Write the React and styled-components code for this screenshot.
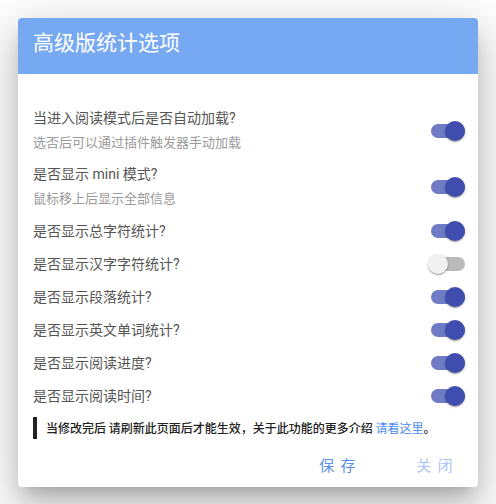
import styled, { createGlobalStyle } from "styled-components";

const GlobalStyle = createGlobalStyle`
  html, body {
    margin: 0;
    padding: 0;
    background: #fff;
  }
  body {
    font-family: Roboto, "Noto Sans CJK SC", sans-serif;
  }
`;

const Dialog = styled.div`
  box-sizing: border-box;
  width: 460px;
  margin: 18px;
  background: #fff;
  border-radius: 4px;
  overflow: hidden;
  box-shadow: 0 11px 15px -7px rgba(0, 0, 0, 0.2),
    0 24px 38px 3px rgba(0, 0, 0, 0.14), 0 9px 46px 8px rgba(0, 0, 0, 0.12);
`;

const Header = styled.div`
  box-sizing: border-box;
  height: 56px;
  padding: 13px 15px 0;
  background: #77a9f2;
  color: #fff;
  font-size: 21px;
  line-height: 21px;
  font-family: "Noto Sans CJK SC", sans-serif;
`;

const Body = styled.div`
  padding: 28.5px 13px 0 15px;
`;

const Row = styled.div`
  box-sizing: border-box;
  display: flex;
  align-items: center;
  justify-content: space-between;
  min-height: 33px;
  padding: 3.5px 0;
`;

const Texts = styled.div`
  display: flex;
  flex-direction: column;
`;

const Label = styled.div`
  font-size: 14px;
  line-height: 24.5px;
  color: #555;
`;

const Hint = styled.div`
  font-size: 13px;
  line-height: 24.5px;
  color: #9a9a9a;
`;

const Track = styled.div`
  position: relative;
  flex: none;
  width: 34px;
  height: 14px;
  border-radius: 7px;
  background: ${(p) => (p.$on ? "#6f7cc5" : "#bababa")};
`;

const Thumb = styled.span`
  position: absolute;
  top: -3px;
  left: ${(p) => (p.$on ? "14px" : "-3px")};
  width: 20px;
  height: 20px;
  border-radius: 50%;
  background: ${(p) => (p.$on ? "#3f4eae" : "#f1f1f1")};
  box-shadow: 0 1px 3px rgba(0, 0, 0, 0.2), 0 1px 1px rgba(0, 0, 0, 0.14),
    0 2px 1px -1px rgba(0, 0, 0, 0.12);
`;

const Note = styled.div`
  margin-top: 4.5px;
  border-left: 4px solid #222;
  padding-left: 9px;
  font-size: 12px;
  line-height: 21.5px;
  font-weight: 500;
  color: #222;
  font-family: "Noto Sans CJK SC", sans-serif;
`;

const Link = styled.a`
  color: #4d8cf2;
  text-decoration: none;
  font-weight: 400;
`;

const Footer = styled.div`
  display: flex;
  justify-content: flex-end;
  gap: 31px;
  margin-top: 8px;
  padding: 0 10px 4px 0;
`;

const Button = styled.button`
  height: 36px;
  padding: 0 14px;
  border: none;
  background: none;
  font-family: "Noto Sans CJK SC", sans-serif;
  font-size: 15px;
  letter-spacing: 1.5px;
  color: ${(p) => (p.$muted ? "#a9c6f6" : "#5a8fe6")};
  cursor: pointer;
`;

const options = [
  { label: "当进入阅读模式后是否自动加载?", hint: "选否后可以通过插件触发器手动加载", on: true },
  { label: "是否显示 mini 模式?", hint: "鼠标移上后显示全部信息", on: true },
  { label: "是否显示总字符统计?", on: true },
  { label: "是否显示汉字字符统计?", on: false },
  { label: "是否显示段落统计?", on: true },
  { label: "是否显示英文单词统计?", on: true },
  { label: "是否显示阅读进度?", on: true },
  { label: "是否显示阅读时间?", on: true },
];

const Switch = ({ on }) => (
  <Track $on={on}>
    <Thumb $on={on} />
  </Track>
);

export default function App() {
  return (
    <>
      <GlobalStyle />
      <Dialog>
        <Header>高级版统计选项</Header>
        <Body>
          {options.map((o) => (
            <Row key={o.label}>
              <Texts>
                <Label>{o.label}</Label>
                {o.hint && <Hint>{o.hint}</Hint>}
              </Texts>
              <Switch on={o.on} />
            </Row>
          ))}
          <Note>
            当修改完后 请刷新此页面后才能生效，关于此功能的更多介绍 <Link href="#">请看这里</Link>。
          </Note>
        </Body>
        <Footer>
          <Button>保 存</Button>
          <Button $muted>关 闭</Button>
        </Footer>
      </Dialog>
    </>
  );
}
